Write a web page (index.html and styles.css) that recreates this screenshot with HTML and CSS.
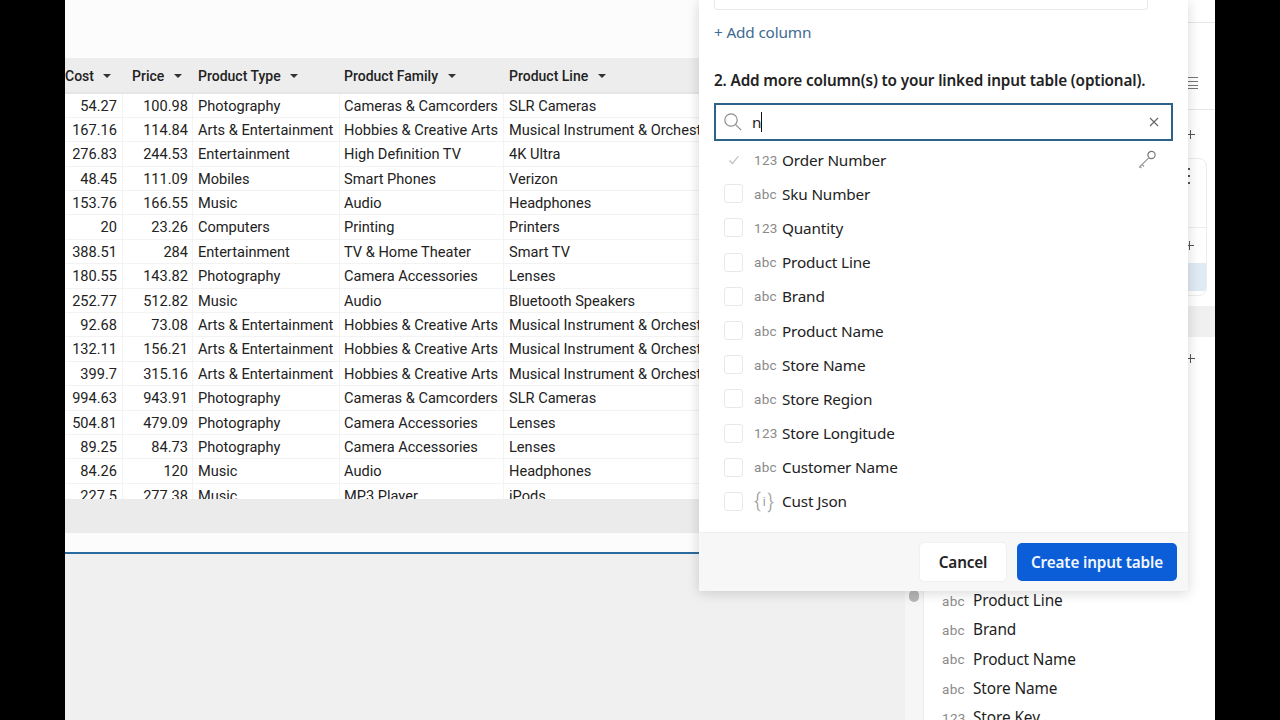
FILE: index.html
```html
<!DOCTYPE html>
<html lang="en">
<head>
<meta charset="utf-8">
<title>Create input table</title>
<link rel="stylesheet" href="styles.css">
</head>
<body>
<div class="stage">
  <main class="main">
    <div class="main-top"></div>
    <section class="grid">
      <div class="row head">
        <div class="hc clip">Cost<i class="caret"></i></div>
        <div class="hc">Price<i class="caret"></i></div>
        <div class="hc">Product Type<i class="caret"></i></div>
        <div class="hc">Product Family<i class="caret"></i></div>
        <div class="hc">Product Line<i class="caret"></i></div>
      </div>
      <div class="row"><div class="n">54.27</div><div class="n p">100.98</div><div>Photography</div><div>Cameras &amp; Camcorders</div><div>SLR Cameras</div></div>
      <div class="row"><div class="n">167.16</div><div class="n p">114.84</div><div>Arts &amp; Entertainment</div><div>Hobbies &amp; Creative Arts</div><div>Musical Instrument &amp; Orchestra</div></div>
      <div class="row"><div class="n">276.83</div><div class="n p">244.53</div><div>Entertainment</div><div>High Definition TV</div><div>4K Ultra</div></div>
      <div class="row"><div class="n">48.45</div><div class="n p">111.09</div><div>Mobiles</div><div>Smart Phones</div><div>Verizon</div></div>
      <div class="row"><div class="n">153.76</div><div class="n p">166.55</div><div>Music</div><div>Audio</div><div>Headphones</div></div>
      <div class="row"><div class="n">20</div><div class="n p">23.26</div><div>Computers</div><div>Printing</div><div>Printers</div></div>
      <div class="row"><div class="n">388.51</div><div class="n p">284</div><div>Entertainment</div><div>TV &amp; Home Theater</div><div>Smart TV</div></div>
      <div class="row"><div class="n">180.55</div><div class="n p">143.82</div><div>Photography</div><div>Camera Accessories</div><div>Lenses</div></div>
      <div class="row"><div class="n">252.77</div><div class="n p">512.82</div><div>Music</div><div>Audio</div><div>Bluetooth Speakers</div></div>
      <div class="row"><div class="n">92.68</div><div class="n p">73.08</div><div>Arts &amp; Entertainment</div><div>Hobbies &amp; Creative Arts</div><div>Musical Instrument &amp; Orchestra</div></div>
      <div class="row"><div class="n">132.11</div><div class="n p">156.21</div><div>Arts &amp; Entertainment</div><div>Hobbies &amp; Creative Arts</div><div>Musical Instrument &amp; Orchestra</div></div>
      <div class="row"><div class="n">399.7</div><div class="n p">315.16</div><div>Arts &amp; Entertainment</div><div>Hobbies &amp; Creative Arts</div><div>Musical Instrument &amp; Orchestra</div></div>
      <div class="row"><div class="n">994.63</div><div class="n p">943.91</div><div>Photography</div><div>Cameras &amp; Camcorders</div><div>SLR Cameras</div></div>
      <div class="row"><div class="n">504.81</div><div class="n p">479.09</div><div>Photography</div><div>Camera Accessories</div><div>Lenses</div></div>
      <div class="row"><div class="n">89.25</div><div class="n p">84.73</div><div>Photography</div><div>Camera Accessories</div><div>Lenses</div></div>
      <div class="row"><div class="n">84.26</div><div class="n p">120</div><div>Music</div><div>Audio</div><div>Headphones</div></div>
      <div class="row"><div class="n">227.5</div><div class="n p">277.38</div><div>Music</div><div>MP3 Player</div><div>iPods</div></div>
    </section>
    <div class="grid-foot"></div>
    <div class="tab-strip"></div>
    <div class="canvas"></div>
  </main>

  <aside class="side">
    <div class="gutter"><i class="thumb"></i></div>
    <div class="side-body">
      <div class="s-top"></div>
      <div class="s-tools">
        <svg class="ic-menu" width="12" height="14" viewBox="0 0 12 14"><path d="M1 1.5h10M1 5.5h10M1 9.5h10M1 12.5h10" stroke="#777" stroke-width="1" fill="none"/></svg>
      </div>
      <div class="s-add"><span class="plus"></span></div>
      <div class="s-card">
        <div class="s-card-a"><span class="dots"><i></i><i></i><i></i></span></div>
        <div class="s-card-b"><span class="plus"></span></div>
        <div class="s-card-c"></div>
      </div>
      <div class="s-band"></div>
      <div class="s-add s-add-2"><span class="plus"></span></div>
      <ul class="fields">
        <li><span class="t">abc</span>Product Line</li>
        <li><span class="t">abc</span>Brand</li>
        <li><span class="t">abc</span>Product Name</li>
        <li><span class="t">abc</span>Store Name</li>
        <li><span class="t">123</span>Store Key</li>
      </ul>
    </div>
  </aside>

  <div class="dialog">
    <div class="dlg-body">
      <div class="prev-field"></div>
      <a class="add-col">+ Add column</a>
      <h2 class="dlg-title">2. Add more column(s) to your linked input table (optional).</h2>
      <div class="search">
        <svg class="ic-search" width="20" height="20" viewBox="0 0 20 20"><circle cx="8" cy="8" r="6.2" fill="none" stroke="#8d8d8d" stroke-width="1.2"/><path d="M12.6 12.6l5.6 5.6" stroke="#8d8d8d" stroke-width="1.2"/></svg>
        <span class="q">n</span><i class="cursor"></i>
        <svg class="ic-x" width="10" height="10" viewBox="0 0 10 10"><path d="M1 1l8 8M9 1l-8 8" stroke="#666" stroke-width="1.1"/></svg>
      </div>
      <ul class="cols">
        <li>
          <span class="cb off"><svg width="12" height="10" viewBox="0 0 12 10"><path d="M1.5 5.5l3 3 6-7.5" fill="none" stroke="#bdbdbd" stroke-width="1.2"/></svg></span>
          <span class="t">123</span><span class="name">Order Number</span>
          <svg class="ic-key" width="20" height="20" viewBox="0 0 20 20"><circle cx="14.5" cy="5" r="3.6" fill="none" stroke="#777" stroke-width="1.2"/><path d="M12 7.6L2 17.5M5 14.5l2 2M3 16.5l1.6 1.6" fill="none" stroke="#999" stroke-width="1.1"/></svg>
        </li>
        <li><span class="cb"></span><span class="t">abc</span><span class="name">Sku Number</span></li>
        <li><span class="cb"></span><span class="t">123</span><span class="name">Quantity</span></li>
        <li><span class="cb"></span><span class="t">abc</span><span class="name">Product Line</span></li>
        <li><span class="cb"></span><span class="t">abc</span><span class="name">Brand</span></li>
        <li><span class="cb"></span><span class="t">abc</span><span class="name">Product Name</span></li>
        <li><span class="cb"></span><span class="t">abc</span><span class="name">Store Name</span></li>
        <li><span class="cb"></span><span class="t">abc</span><span class="name">Store Region</span></li>
        <li><span class="cb"></span><span class="t">123</span><span class="name">Store Longitude</span></li>
        <li><span class="cb"></span><span class="t">abc</span><span class="name">Customer Name</span></li>
        <li><span class="cb"></span><span class="t json">{<b>i</b>}</span><span class="name">Cust Json</span></li>
      </ul>
    </div>
    <div class="dlg-foot">
      <button class="btn btn-cancel">Cancel</button>
      <button class="btn btn-primary">Create input table</button>
    </div>
  </div>
</div>
</body>
</html>
```

FILE: styles.css
```css
* { box-sizing: border-box; }
html, body { margin: 0; height: 100%; background: #000; overflow: hidden; }
body { font-family: "Noto Sans", "Open Sans", sans-serif; font-size: 15.3px; letter-spacing: -.15px; color: #1d1d1d; }
ul { list-style: none; margin: 0; padding: 0; }

.stage { position: relative; display: flex; width: 1150px; height: 720px; margin-left: 65px; overflow: hidden; background: #f0f0f0; }

/* left: data table */
.main { width: 840px; flex: none; display: flex; flex-direction: column; }
.main-top { height: 58px; background: #fcfcfc; }
.grid { height: 441px; overflow: hidden; background: #fff; font-family: Roboto, sans-serif; font-size: 14.6px; letter-spacing: 0; color: #222; }
.row { display: grid; grid-template-columns: 58px 70px 147px 164px 1fr; height: 24.4px; line-height: 24.4px; border-bottom: 1px solid #f3f3f3; white-space: nowrap; }
.row > div { padding-left: 5px; border-right: 1px solid #f4f4f4; overflow: hidden; }
.row > div:nth-child(4) { padding-left: 4px; }
.row > .n { padding: 0 5px 0 0; text-align: right; }
.row > .n.p { padding-right: 4px; }
.row > div:last-child { border-right: 0; }
.row.head { height: 35.5px; line-height: 20px; background: #ededed; border-bottom: 2px solid #e6e6e6; font-size: 14px; font-weight: 500; color: #222; }
.row.head > .hc { display: flex; align-items: center; padding-top: 2px; border-right: 0; }
.row.head > .clip { padding-left: 0; }
.row.head > .hc:nth-child(2) { padding-left: 9px; }
.caret { width: 0; height: 0; margin-left: 9.5px; border: 4.5px solid transparent; border-top: 4.5px solid #333; border-bottom: 0; }
.grid-foot { height: 34px; background: #ebebeb; }
.tab-strip { height: 21px; background: #fcfcfc; border-bottom: 2px solid #2b6a9c; }
.canvas { flex: 1; background: #f0f0f0; }

/* right: side panel */
.side { flex: 1; display: flex; min-width: 0; }
.gutter { width: 18px; flex: none; background: #f6f6f6; }
.thumb { display: block; width: 10px; height: 12px; margin: 590px 0 0 4px; border-radius: 5px; background: #b5b5b5; }
.side-body { flex: 1; background: #fff; display: flex; flex-direction: column; border-left: 1px solid #eee; min-width: 0; }
.s-top { height: 23px; flex: none; border-bottom: 1px solid #e6e6e6; }
.s-tools { height: 87px; flex: none; display: flex; justify-content: flex-end; align-items: flex-end; padding: 0 16px 19px 0; border-bottom: 1px solid #e6e6e6; }
.s-add { height: 48px; flex: none; display: flex; justify-content: flex-end; align-items: center; padding-right: 20px; }
.plus { display: block; width: 9px; height: 9px; background: linear-gradient(#555,#555) center/9px 1px no-repeat, linear-gradient(#555,#555) center/1px 9px no-repeat; }
.s-card { height: 138px; flex: none; margin: 0 8px 0 0; border: 1px solid #ececec; border-radius: 8px; display: flex; flex-direction: column; overflow: hidden; }
.s-card-a { height: 69px; flex: none; display: flex; justify-content: flex-end; padding: 9px 16px 0 0; border-bottom: 1px solid #eee; }
.dots { display: flex; flex-direction: column; gap: 5px; }
.dots i { width: 2px; height: 2px; background: #555; }
.s-card-b { height: 35px; flex: none; display: flex; justify-content: flex-end; align-items: center; padding-right: 12px; }
.s-card-c { height: 28px; flex: none; background: #dfeaf5; }
.s-band { height: 31px; flex: none; margin-top: 10px; background: #f0f0f0; }
.s-add-2 { height: 42px; }
.fields { margin-top: 207px; padding-left: 18px; font-size: 15.4px; letter-spacing: -.1px; }
.fields li { display: flex; align-items: center; height: 29.3px; white-space: nowrap; }
.t { width: 28px; flex: none; font-family: Roboto, sans-serif; font-size: 13.5px; color: #8a8a8a; letter-spacing: .3px; }
.fields .t { width: 31px; }

/* dialog overlay */
.dialog { position: absolute; left: 634px; top: 0; width: 489px; height: 591px; display: flex; flex-direction: column; background: #fff; box-shadow: 0 2px 12px rgba(0,0,0,.16); }
.dlg-body { flex: 1; padding: 0 15px; min-height: 0; }
.prev-field { height: 10px; width: 434px; border: 1px solid #e8e8e8; border-top: 0; border-radius: 0 0 4px 4px; }
.add-col { display: block; margin-top: 10px; line-height: 24px; color: #3e6b90; }
.dlg-title { margin: 24px 0 0; font-size: inherit; font-weight: 600; line-height: 24px; color: #222; white-space: nowrap; }
.search { display: flex; align-items: center; height: 38px; width: 459px; margin-top: 11px; padding: 0 12px 0 7px; border: 2px solid #2c6387; }
.ic-search { flex: none; }
.q { margin-left: 9px; }
.cursor { width: 1px; height: 20px; background: #111; }
.ic-x { margin-left: auto; }
.cols { margin-top: 1.5px; }
.cols li { display: flex; align-items: center; height: 34.2px; padding-left: 10px; white-space: nowrap; }
.cb { display: flex; align-items: center; justify-content: center; width: 19px; height: 19px; flex: none; margin-right: 11px; border: 1px solid #e8e8e8; border-radius: 3px; background: #fff; }
.cb.off { border-color: transparent; }
.name { color: #222; }
.ic-key { margin-left: auto; margin-right: 16px; }
.json { font-size: 20px; font-weight: 300; color: #999; letter-spacing: 2px; line-height: 20px; }
.json b { font-size: 12px; font-weight: 400; vertical-align: 2px; }
.dlg-foot { height: 59px; flex: none; display: flex; justify-content: flex-end; align-items: center; gap: 11px; padding: 0 11px 0 0; background: #f7f7f7; border-top: 1px solid #efefef; }
.btn { height: 38px; border: 0; font-family: inherit; font-size: inherit; letter-spacing: inherit; font-weight: 600; border-radius: 4px; }
.btn-cancel { width: 86px; background: #fff; color: #222; box-shadow: 0 0 2px rgba(0,0,0,.1); }
.btn-primary { width: 160px; background: #0b5ed7; color: #f2f7ff; border-radius: 5px; }
```
